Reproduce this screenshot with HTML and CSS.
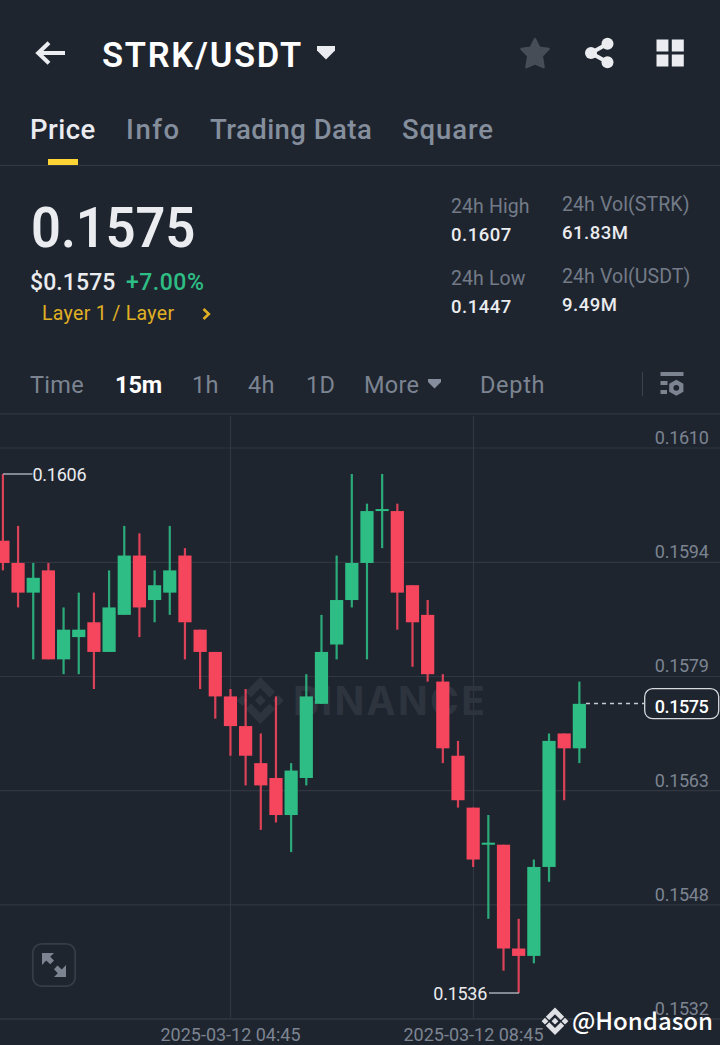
FILE: index.html
```html
<!DOCTYPE html>
<html lang="en">
<head>
<meta charset="utf-8">
<title>STRK/USDT</title>
<link rel="stylesheet" href="styles.css">
</head>
<body>
<div class="app">
  <header class="header">
    <svg class="back" width="30" height="24" viewBox="0 0 30 24"><path d="M30 12H4M14 1.8L3.2 12L14 22.2" fill="none" stroke="#eaecef" stroke-width="4"/></svg>
    <h1 class="pair">STRK/USDT</h1>
    <svg class="caret" width="18" height="14" viewBox="0 0 18 14"><path d="M0 0H18V4.5L9 13.5L0 4.5Z" fill="#eaecef"/></svg>
    <div class="actions">
      <svg width="30" height="32" viewBox="0 0 30 32"><path d="M15 2L19.2 10.6L28.6 12L21.8 18.9L23.6 30.2L15 26.4L6.4 30.2L8.2 18.9L1.4 12L10.8 10.6Z" fill="#474d57" stroke="#474d57" stroke-width="2.4" stroke-linejoin="round"/></svg>
      <svg width="30" height="32" viewBox="0 0 30 32"><g fill="#eaecef"><circle cx="6" cy="16" r="6"/><circle cx="22.5" cy="6.8" r="6"/><circle cx="22.5" cy="25.2" r="6"/></g><path d="M22.5 6.8L6 16L22.5 25.2" fill="none" stroke="#eaecef" stroke-width="4"/></svg>
      <svg width="28" height="28" viewBox="0 0 28 28"><path d="M.5 .5H12.4V12.4H.5ZM15.8 .5H27.8V12.4H15.8ZM.5 15.6H12.4V27.6H.5ZM15.8 15.6H27.8V27.6H15.8Z" fill="#eaecef"/></svg>
    </div>
  </header>

  <nav class="tabs">
    <span class="tab tab-price active">Price</span>
    <span class="tab tab-info">Info</span>
    <span class="tab tab-data">Trading Data</span>
    <span class="tab tab-square">Square</span>
  </nav>

  <section class="summary">
    <div class="quote">
      <div class="last"><span>0.1575</span></div>
      <div class="fiat"><span class="usd">$0.1575</span><span class="change">+7.00%</span></div>
      <div class="tag"><span>Layer 1 / Layer</span><svg width="9" height="12" viewBox="0 0 9 12"><path d="M1.5 1L6.8 6L1.5 11" fill="none" stroke="#e0b023" stroke-width="2.6"/></svg></div>
    </div>
    <dl class="stats">
      <dt>24h High</dt><dd>0.1607</dd>
      <dt>24h Low</dt><dd>0.1447</dd>
    </dl>
    <dl class="stats volume">
      <dt>24h Vol(STRK)</dt><dd>61.83M</dd>
      <dt>24h Vol(USDT)</dt><dd>9.49M</dd>
    </dl>
  </section>

  <nav class="intervals">
    <span class="iv-time">Time</span>
    <span class="iv-15m selected">15m</span>
    <span class="iv-1h">1h</span>
    <span class="iv-4h">4h</span>
    <span class="iv-1d">1D</span>
    <span class="iv-more">More<svg width="13" height="10" viewBox="0 0 13 10"><path d="M0 0H13V3L6.5 9.6L0 3Z" fill="#848e9c"/></svg></span>
    <span class="iv-depth">Depth</span>
    <svg class="settings" width="24" height="24" viewBox="0 0 24 24"><path d="M.5 0H23.5V4H.5ZM.5 9H7.5V13H.5ZM.5 18H7V22H.5Z" fill="#7c8491"/><path fill-rule="evenodd" d="M16.3 7.8L23.4 11.8V19.8L16.3 23.8L9.2 19.8V11.8ZM16.3 12.9A2.9 2.9 0 1 0 16.3 18.7A2.9 2.9 0 1 0 16.3 12.9Z" fill="#7c8491"/></svg>
  </nav>

  <svg class="chart" width="720" height="632" viewBox="0 413 720 632">
    <g class="grid">
      <path class="edge" d="M0 413.8H720M0 1019H720"/>
      <path d="M0 448H720M0 562.3H720M0 676.5H720M0 790.6H720M0 904.8H720M230.5 416V1018M473.5 416V1018"/>
    </g>
    <g class="watermark">
      <path d="M260.3 677L275.2 691.9L269.7 697.4L260.3 688L250.9 697.4L245.4 691.9ZM260.3 724L275.2 709.1L269.7 703.6L260.3 713L250.9 703.6L245.4 709.1ZM260.3 695L265.8 700.5L260.3 706L254.8 700.5ZM242.3 695L247.8 700.5L242.3 706L236.8 700.5ZM278.3 695L283.8 700.5L278.3 706L272.8 700.5Z"/>
      <text x="293" y="714.5" textLength="192">BINANCE</text>
    </g>
    <g id="candles"></g>
    <path class="leader" d="M3 474H32.5M489 993H519"/>
    <g class="marks">
      <text x="32.5" y="481" textLength="54">0.1606</text>
      <text x="433.3" y="1000" textLength="54">0.1536</text>
    </g>
    <g class="axis">
      <text x="654.8" y="444" textLength="54">0.1610</text>
      <text x="654.8" y="558" textLength="54">0.1594</text>
      <text x="654.8" y="672" textLength="54">0.1579</text>
      <text x="654.8" y="787" textLength="54">0.1563</text>
      <text x="654.8" y="901" textLength="54">0.1548</text>
      <text x="654.8" y="1015" textLength="54">0.1532</text>
      <text x="160.5" y="1041" textLength="140">2025-03-12 04:45</text>
      <text x="403.5" y="1041" textLength="140">2025-03-12 08:45</text>
    </g>
    <path class="dash" d="M586 703.5H644"/>
    <rect class="badge" x="644.7" y="688.7" width="74" height="30" rx="8"/>
    <text class="badge-text" x="654.8" y="713" textLength="54">0.1575</text>
    <g class="expand">
      <rect x="32.8" y="943.8" width="42.4" height="42.4" rx="9"/>
      <path d="M42 953H54L50.2 956.8L54 960.6L50.3 964.3L46.2 960.4L42 965ZM66 977H54L57.8 973.2L54 969.2L57.5 965.5L61.8 969.4L66 965Z"/>
    </g>
    <g class="author">
      <path d="M555 1007.5L564.2 1016.7L560.8 1020.1L555 1014.3L549.2 1020.1L545.8 1016.7ZM555 1034.9L564.2 1025.7L560.8 1022.3L555 1028.1L549.2 1022.3L545.8 1025.7ZM555 1017.8L558.4 1021.2L555 1024.6L551.6 1021.2ZM545 1017.8L548.4 1021.2L545 1024.6L541.6 1021.2ZM565 1017.8L568.4 1021.2L565 1024.6L561.6 1021.2Z"/>
      <text x="572" y="1029.5" textLength="141" lengthAdjust="spacingAndGlyphs">@Hondason</text>
    </g>
  </svg>
</div>
<script src="chart.js"></script>
</body>
</html>
```

FILE: chart.js
```js
// Each candle: direction, high, body top, body bottom, low (price x 10000).
const candles = [
  ['down',1606,1597,1594,1593],['down',1599,1594,1590,1588],['up',1594,1592,1590,1581],
  ['down',1594,1593,1581,1581],['up',1588,1585,1581,1579],['up',1590,1585,1584,1579],
  ['down',1590,1586,1582,1577],['up',1593,1588,1582,1582],['up',1599,1595,1587,1587],
  ['down',1598,1595,1588,1584],['up',1593,1591,1589,1586],['up',1599,1593,1590,1587],
  ['down',1596,1595,1586,1581],['down',1585,1585,1582,1577],['down',1582,1582,1576,1573],
  ['down',1577,1576,1572,1568],['down',1577,1572,1568,1564],['down',1571,1567,1564,1558],
  ['down',1576,1565,1560,1559],['up',1567,1566,1560,1555],['up',1579,1576,1565,1564],
  ['up',1587,1582,1575,1575],['up',1595,1589,1583,1581],['up',1606,1594,1589,1588],
  ['up',1602,1601,1594,1581],['up',1606,1601,1601,1596],['down',1602,1601,1590,1585],
  ['down',1591,1591,1586,1580],['down',1589,1587,1579,1578],['down',1579,1578,1569,1567],
  ['down',1570,1568,1562,1561],['down',1561,1561,1554,1553],['up',1560,1556,1556,1546],
  ['down',1556,1556,1542,1539],['down',1546,1542,1541,1536],['up',1554,1553,1541,1540],
  ['up',1571,1570,1553,1551],['down',1571,1571,1569,1562],['up',1578,1575,1569,1567]
];
const NS = 'http://www.w3.org/2000/svg';
const group = document.getElementById('candles');
const y = price => 474 + (1606 - price) * 7.414;

function rect(cls, x, top, width, height) {
  const r = document.createElementNS(NS, 'rect');
  r.setAttribute('class', cls);
  r.setAttribute('x', x.toFixed(2));
  r.setAttribute('y', top.toFixed(2));
  r.setAttribute('width', width);
  r.setAttribute('height', height.toFixed(2));
  group.appendChild(r);
}

candles.forEach(([dir, high, top, bottom, low], i) => {
  const x = 2.9 + i * 15.17;
  rect('wick ' + dir, x - 1.1, y(high), 2.2, y(low) - y(high));
  if (top === bottom) rect(dir, x - 6.6, y(top) - 2, 13.2, 2);
  else rect(dir, x - 6.6, y(top), 13.2, y(bottom) - y(top));
});
```

FILE: styles.css
```css
* { box-sizing: border-box; }
body {
  margin: 0;
  background: #1f252f;
  color: #eaecef;
  font-family: Roboto, "Liberation Sans", sans-serif;
}
svg { display: block; flex: none; }
.app { width: 720px; height: 1045px; overflow: hidden; }

.header { display: flex; align-items: center; height: 106px; padding: 0 36px 0 35px; }
.pair { width: 202px; margin: 4px 0 0 37px; font-size: 34.5px; font-weight: 600; line-height: 40px; letter-spacing: 1.7px; color: #fff; white-space: nowrap; }
.caret { margin-left: 13px; }
.actions { display: flex; align-items: center; gap: 35px; margin-left: auto; }
.actions svg:last-child { margin-left: 6px; }

.tabs { display: flex; height: 60px; padding-left: 30px; border-bottom: 1px solid #323943; }
.tab { position: relative; line-height: 47px; font-size: 27.5px; font-weight: 500; letter-spacing: .45px; color: #848e9c; white-space: nowrap; }
.tab-price { width: 96px; }
.tab-info { width: 84px; letter-spacing: 1.6px; }
.tab-data { width: 192px; }
.tab-square { letter-spacing: .9px; }
.active { color: #eaecef; }
.active::after { content: ""; position: absolute; left: 18px; bottom: 0; width: 30px; height: 6px; background: #fcd535; }

.summary { display: flex; height: 191px; padding: 0 0 0 30px; }
.quote { width: 421px; padding-top: 32px; }
.last { height: 60px; line-height: 61px; font-size: 56px; font-weight: 600; }
.last span { display: inline-block; margin-left: 1px; transform: scaleX(.935); transform-origin: left; }
.fiat { display: flex; margin-top: 10px; line-height: 30px; font-size: 23px; font-weight: 500; }
.usd { width: 96px; letter-spacing: .1px; }
.change { color: #2ebd85; letter-spacing: .5px; }
.tag { display: flex; align-items: center; margin-top: 3px; padding-left: 12px; line-height: 26px; font-size: 19.5px; letter-spacing: .32px; color: #e0b023; }
.tag span { width: 160px; }
.stats { width: 111px; margin: 0; padding-top: 27px; line-height: 28px; white-space: nowrap; }
.volume { width: auto; padding-top: 25px; }
.stats dt { font-size: 19.5px; letter-spacing: .1px; color: #737b88; }
.stats dd { margin: 0 0 16px; font-size: 18.5px; font-weight: 500; letter-spacing: .5px; }

.intervals { display: flex; align-items: center; height: 56px; padding-left: 30px; font-size: 23.5px; line-height: 56px; letter-spacing: .3px; color: #7c8491; white-space: nowrap; }
.iv-time { width: 85px; }
.iv-15m { width: 77px; }
.iv-1h { width: 56px; }
.iv-4h { width: 58px; }
.iv-1d { width: 58px; }
.iv-more { display: flex; align-items: center; justify-content: space-between; width: 77px; }
.iv-more svg { margin-top: -2px; }
.iv-depth { margin-left: 39px; letter-spacing: .7px; }
.selected { font-weight: 700; letter-spacing: -.1px; color: #fff; }
.settings { box-sizing: content-box; margin: -2px 36px 0 auto; padding-left: 17px; border-left: 1px solid #3b424d; }

.grid path { fill: none; stroke: #303741; stroke-width: 1.2; }
.grid .edge { stroke: #2b323c; stroke-width: 2; }
.watermark { fill: #2d343e; }
.watermark text { font: 700 39px Inter, sans-serif; }
.up { fill: #2ebd85; }
.down { fill: #f6465d; }
.wick { opacity: .88; }
.leader { fill: none; stroke: #a4aab3; stroke-width: 1.5; }
.marks text, .axis text, .badge-text { font-size: 18px; }
.marks { fill: #eaecef; }
.axis { fill: #7c8491; }
.dash { stroke: #c7cbd1; stroke-width: 1.4; stroke-dasharray: 4 4; }
.badge { fill: #1f252f; stroke: #d5d8dc; stroke-width: 1.3; }
.badge-text { fill: #fff; font-weight: 500; }
.expand rect { fill: #1f252f; stroke: #363d48; stroke-width: 1.8; }
.expand path { fill: #7c8491; }
.author path { fill: #dfe1e4; }
.author text { fill: #fff; font: 500 24px "Noto Sans CJK SC", "Noto Sans", sans-serif; }
```
